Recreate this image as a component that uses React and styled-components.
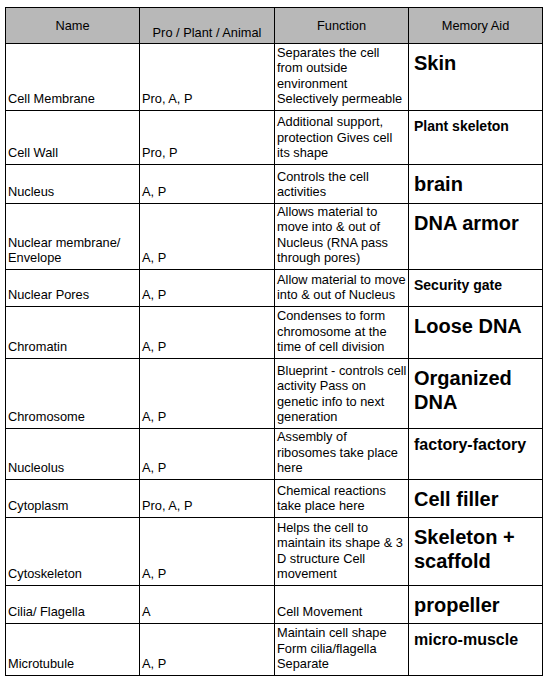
import React from "react";
import styled, { createGlobalStyle } from "styled-components";

const Global = createGlobalStyle`
  html, body { margin: 0; padding: 0; background: #fff; }
  body { font-family: "Liberation Sans", Arial, sans-serif; color: #000; }
`;

const Page = styled.div`
  padding: 7px 0 0 5px;
`;

const Table = styled.div`
  display: flex;
  flex-direction: column;
  width: max-content;
  border-top: 1px solid #000;
  border-left: 1px solid #000;
`;

const Row = styled.div`
  display: grid;
  grid-template-columns: 134px 135px 134px 134px;
  height: ${(p) => p.$h}px;
  background: ${(p) => (p.$head ? "#b8b8b8" : "#fff")};
`;

const Cell = styled.div`
  box-sizing: border-box;
  border-right: 1px solid #000;
  border-bottom: 1px solid #000;
  display: flex;
  flex-direction: column;
  justify-content: ${(p) =>
    p.$v === "top" ? "flex-start" : p.$v === "middle" ? "center" : "flex-end"};
  padding: 0 2px 3px 2px;
  font-size: 12.8px;
  line-height: 15.6px;
  overflow: hidden;
  white-space: nowrap;
`;

const HeadCell = styled(Cell)`
  align-items: center;
  padding-bottom: ${(p) => (p.$v === "middle" ? 0 : 3)}px;
  line-height: 15px;
`;

const AidCell = styled(Cell)`
  padding: ${(p) => (p.$size === 16 ? 5.5 : 6.5)}px 2px 0 5px;
  font-weight: bold;
  font-size: ${(p) => p.$size}px;
  line-height: ${(p) => Math.round(p.$size * 1.22)}px;
`;

const Lines = ({ lines }) =>
  lines.map((l, i) => <span key={i}>{l}</span>);

const rows = [
  { name: ["Cell Membrane"], kind: "Pro, A, P", fn: ["Separates the cell", "from outside", "environment", "Selectively permeable"], aid: ["Skin"], size: 20, h: 67 },
  { name: ["Cell Wall"], kind: "Pro, P", fn: ["Additional support,", "protection Gives cell", "its shape"], aid: ["Plant skeleton"], size: 14, h: 54 },
  { name: ["Nucleus"], kind: "A, P", fn: ["Controls the cell", "activities"], aid: ["brain"], size: 20, h: 39 },
  { name: ["Nuclear membrane/", "Envelope"], kind: "A, P", fn: ["Allows material to", "move into & out of", "Nucleus (RNA pass", "through pores)"], aid: ["DNA armor"], size: 20, h: 66 },
  { name: ["Nuclear Pores"], kind: "A, P", fn: ["Allow material to move", "into & out of Nucleus"], aid: ["Security gate"], size: 14, h: 37 },
  { name: ["Chromatin"], kind: "A, P", fn: ["Condenses to form", "chromosome at the", "time of cell division"], aid: ["Loose DNA"], size: 20, h: 52 },
  { name: ["Chromosome"], kind: "A, P", fn: ["Blueprint - controls cell", "activity Pass on", "genetic info to next", "generation"], aid: ["Organized", "DNA"], size: 20, h: 70 },
  { name: ["Nucleolus"], kind: "A, P", fn: ["Assembly of", "ribosomes take place", "here"], aid: ["factory-factory"], size: 16, h: 51 },
  { name: ["Cytoplasm"], kind: "Pro, A, P", fn: ["Chemical reactions", "take place here"], aid: ["Cell filler"], size: 20, h: 38 },
  { name: ["Cytoskeleton"], kind: "A, P", fn: ["Helps the cell to", "maintain its shape & 3", "D structure Cell", "movement"], aid: ["Skeleton +", "scaffold"], size: 20, h: 68 },
  { name: ["Cilia/ Flagella"], kind: "A", fn: ["Cell Movement"], aid: ["propeller"], size: 20, h: 38 },
  { name: ["Microtubule"], kind: "A, P", fn: ["Maintain cell shape", "Form cilia/flagella", "Separate"], aid: ["micro-muscle"], size: 16, h: 52 },
];

export default function App() {
  return (
    <Page>
      <Global />
      <Table>
        <Row $head $h={36}>
          <HeadCell $v="middle">Name</HeadCell>
          <HeadCell $v="bottom">Pro / Plant / Animal</HeadCell>
          <HeadCell $v="middle">Function</HeadCell>
          <HeadCell $v="middle">Memory Aid</HeadCell>
        </Row>
        {rows.map((r, i) => (
          <Row key={i} $h={r.h}>
            <Cell $v="bottom"><Lines lines={r.name} /></Cell>
            <Cell $v="bottom">{r.kind}</Cell>
            <Cell $v="bottom"><Lines lines={r.fn} /></Cell>
            <AidCell $v="top" $size={r.size}><Lines lines={r.aid} /></AidCell>
          </Row>
        ))}
      </Table>
    </Page>
  );
}
